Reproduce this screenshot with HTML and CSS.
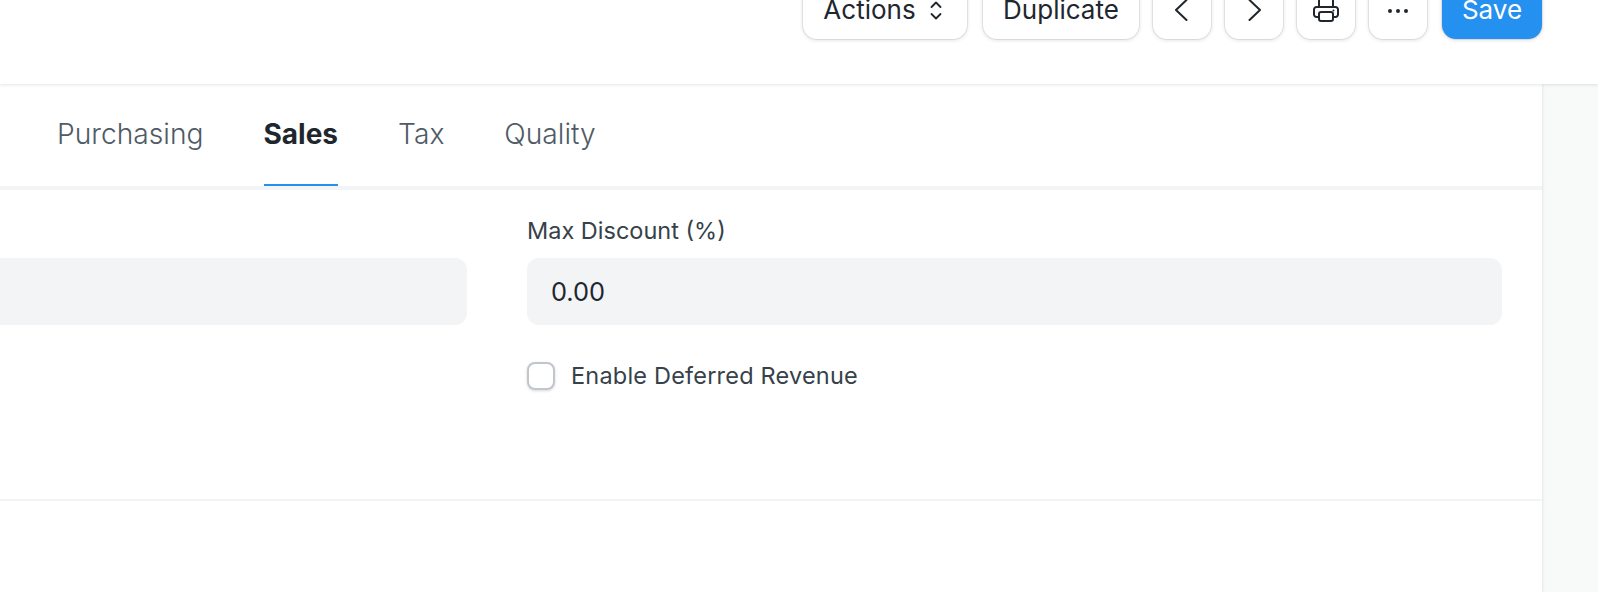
FILE: index.html
```html
<!DOCTYPE html>
<html lang="en">
<head>
    <meta charset="UTF-8">
    <meta name="viewport" content="width=device-width, initial-scale=1.0">
    <link rel="stylesheet" href="styles.css">
    <title>Item</title>
</head>
<body>
    <div class="page-head">
        <button class="btn btn-actions">Actions
            <svg class="icon-updown" width="14" height="22" viewBox="0 0 14 22" fill="none" stroke="#1f272e" stroke-width="1.8" stroke-linecap="round" stroke-linejoin="round"><path d="M2.500 8 7 3.500 11.500 8"/><path d="M2.500 15 7 19.500 11.500 15"/></svg>
        </button>
        <button class="btn btn-duplicate">Duplicate</button>
        <button class="btn btn-icon">
            <svg width="28" height="28" viewBox="0 0 28 28" fill="none" stroke="#1f272e" stroke-width="2" stroke-linecap="round" stroke-linejoin="round"><path d="M18.500 4 8 14l10.500 10"/></svg>
        </button>
        <button class="btn btn-icon">
            <svg width="28" height="28" viewBox="0 0 28 28" fill="none" stroke="#1f272e" stroke-width="2" stroke-linecap="round" stroke-linejoin="round"><path d="M9.500 4 20 14 9.500 24"/></svg>
        </button>
        <button class="btn btn-icon">
            <svg width="28" height="28" viewBox="0 0 28 28" fill="none" stroke="#1f272e" stroke-width="2" stroke-linecap="round" stroke-linejoin="round"><path d="M7 11V3h14v8"/><path d="M7 21H4.500A2.500 2.500 0 0 1 2 18.500v-5A2.500 2.500 0 0 1 4.500 11h19a2.500 2.500 0 0 1 2.500 2.500v5a2.500 2.500 0 0 1-2.500 2.500H21"/><rect x="7" y="16" width="14" height="9" rx="2"/><path d="M21.500 14.500h.01"/></svg>
        </button>
        <button class="btn btn-icon">
            <svg width="28" height="28" viewBox="0 0 28 28" fill="#1f272e"><circle cx="6" cy="15" r="2"/><circle cx="14" cy="15" r="2"/><circle cx="22" cy="15" r="2"/></svg>
        </button>
        <button class="btn btn-primary">Save</button>
    </div>

    <div class="page-body">
        <div class="card">
            <div class="tabs">
                <a class="tab">Purchasing</a>
                <a class="tab active">Sales</a>
                <a class="tab">Tax</a>
                <a class="tab">Quality</a>
            </div>

            <div class="section">
                <div class="col">
                    <div class="field-label">&nbsp;</div>
                    <div class="input"></div>
                </div>
                <div class="col">
                    <div class="field-label">Max Discount (%)</div>
                    <div class="input">0.00</div>
                    <label class="check-row">
                        <span class="checkbox"></span>
                        <span class="check-text">Enable Deferred Revenue</span>
                    </label>
                </div>
            </div>
        </div>
    </div>
</body>
</html>
```

FILE: styles.css
```css
body {
    font-family: Inter, "Liberation Sans", sans-serif;
    margin: 0;
    padding: 0;
    height: 592px;
    overflow: hidden;
    background-color: #f8f9f9;
    color: #1f272e;
}

/* top bar, the buttons run off the top of the window */
.page-head {
    position: relative;
    z-index: 2;
    display: flex;
    justify-content: flex-end;
    align-items: flex-end;
    gap: 14px;
    height: 84px;
    box-sizing: border-box;
    padding: 0 56px 45px 0;
    background-color: white;
    box-shadow: 0 1px 3px rgba(25, 39, 52, 0.12);
    overflow: hidden;
}

.btn {
    flex: none;
    display: flex;
    align-items: center;
    justify-content: center;
    height: 70px;
    padding: 0;
    padding-top: 11px;
    box-sizing: border-box;
    border: none;
    border-radius: 14px;
    background-color: white;
    color: #1f272e;
    font-family: inherit;
    font-size: 26px;
    box-shadow: 0 0 0 1px rgba(0, 0, 0, 0.07), 0 1px 4px rgba(0, 0, 0, 0.14);
}

.btn-actions {
    width: 164px;
    gap: 13px;
    padding-right: 4px;
    margin-right: 2px;
}

.btn-duplicate {
    width: 156px;
}

.btn-icon {
    width: 58px;
    padding-top: 12px;
}

.btn-primary {
    width: 100px;
    margin-left: 1px;
    background-color: #2490ef;
    color: white;
}

.card {
    width: 1542px;
    height: 508px;
    box-sizing: border-box;
    background-color: white;
    box-shadow: 0 0 3px rgba(25, 39, 52, 0.16);
}

.tabs {
    display: flex;
    gap: 60px;
    height: 106px;
    box-sizing: border-box;
    padding-left: 57px;
    border-bottom: 4px solid #f3f4f6;
}

.tab {
    height: 102px;
    box-sizing: border-box;
    padding-top: 32px;
    font-size: 28.2px;
    line-height: 36px;
    color: #4f5b66;
    font-weight: 350;
}

.tab.active {
    font-size: 28px;
    font-weight: 700;
    color: #1f272e;
    border-bottom: 2px solid #2490ef;
}

/* first column runs off the left of the window */
.section {
    display: grid;
    grid-template-columns: 975px 975px;
    column-gap: 60px;
    margin-left: -508px;
    height: 311px;
    box-sizing: border-box;
    padding-top: 26px;
    border-bottom: 2px solid #f3f4f6;
}

.field-label {
    font-size: 23.5px;
    line-height: 29px;
    color: #36414a;
    margin-bottom: 13px;
}

.input {
    display: flex;
    align-items: center;
    height: 67px;
    box-sizing: border-box;
    padding-left: 24px;
    border-radius: 12px;
    background-color: #f3f4f6;
    font-size: 25.4px;
}

.check-row {
    display: flex;
    align-items: center;
    gap: 16px;
    margin-top: 36px;
    font-size: 23.5px;
    letter-spacing: 0.2px;
    line-height: 28px;
    color: #36414a;
}

.check-text {
    padding-top: 1px;
}

.checkbox {
    width: 28px;
    height: 28px;
    box-sizing: border-box;
    border: 2px solid #c0c6cc;
    border-radius: 8px;
    background-color: white;
    box-shadow: 0 1px 3px rgba(0, 0, 0, 0.15);
}
```
